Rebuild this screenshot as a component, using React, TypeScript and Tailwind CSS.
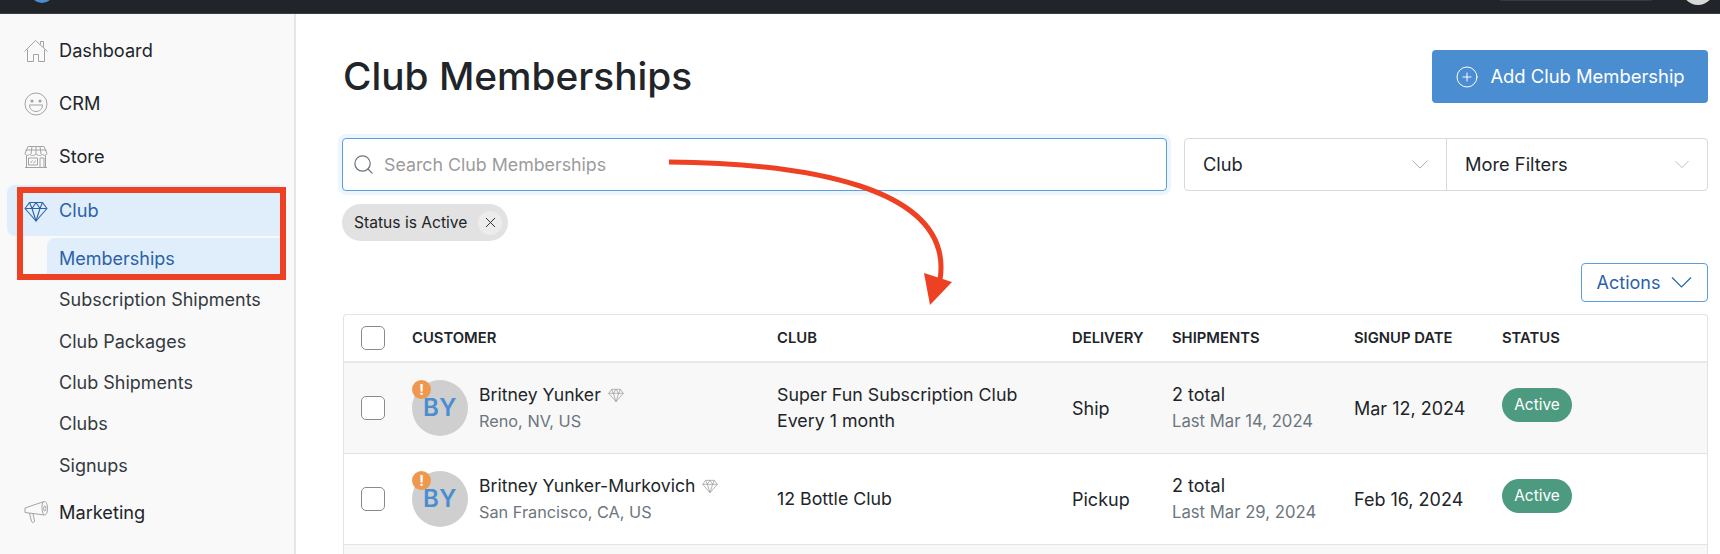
import { CirclePlus, Search, X } from 'lucide-react'

const FONT = { fontFamily: 'Inter, "Noto Sans", sans-serif' }

function HouseIcon() {
  return (
    <svg viewBox="0 0 24 24" className="h-[24px] w-[24px] text-[#a3a3a3]" fill="none" stroke="currentColor" strokeWidth="1" strokeLinejoin="round">
      <path d="M0.5 12.5 11.5 1.5 23.5 12.5" />
      <path d="M16.5 5.5V2.5H19.5V8.5" />
      <path d="M3.5 10.5V22.5H9.5V15.5H14.5V22.5H20.5V10.5" />
    </svg>
  )
}

function LaughIcon() {
  return (
    <svg viewBox="0 0 24 24" className="h-[24px] w-[24px] text-[#a3a3a3]" fill="none" stroke="currentColor" strokeWidth="1">
      <circle cx="12" cy="12" r="11" />
      <circle cx="8" cy="9" r="1.6" fill="currentColor" stroke="none" />
      <circle cx="16" cy="9" r="1.6" fill="currentColor" stroke="none" />
      <path d="M5.5 13H18.5C18.5 17 15.5 19.5 12 19.5S5.5 17 5.5 13Z" />
    </svg>
  )
}

function StoreIcon() {
  return (
    <svg viewBox="0 0 24 24" className="h-[24px] w-[24px] text-[#a3a3a3]" fill="none" stroke="currentColor" strokeWidth="1" strokeLinejoin="round">
      <path d="M4 1.5H20L23 8.5C23 10.5 19.5 11 18.5 9C17.5 11 14 11 12 9C10 11 6.5 11 5.5 9C4.5 11 1 10.5 1 8.5Z" />
      <path d="M8 1.5 7 9M12 1.5V9M16 1.5 17 9M1.5 5H22.5" />
      <path d="M2.5 10.5V22.5H21.5V10.5M1 22.5H23" />
      <path d="M4.5 13H13.5V20H4.5ZM16 13H20V22.5H16Z" />
      <path d="M6.5 18 8.5 15.5M9.5 18.5 11.5 15.5" />
    </svg>
  )
}

function MegaphoneIcon() {
  return (
    <svg viewBox="0 0 24 24" className="h-[24px] w-[24px] text-[#a3a3a3]" fill="none" stroke="currentColor" strokeWidth="1" strokeLinejoin="round">
      <path d="M1 8 20 1.5C22.5 1.5 23.5 5 23.5 8.5S22.5 15 20.5 15L1 12.5Z" />
      <path d="M19 2C17.5 4 17.5 12.5 20 15" />
      <ellipse cx="20.8" cy="8.5" rx="1.2" ry="2.5" />
      <path d="M5.5 13 7.5 21.5C8 23 10.5 22.5 10.5 21L9 13.5" />
    </svg>
  )
}

function GemIcon({ className }: { className: string }) {
  return (
    <svg viewBox="0 0 24 24" className={className} fill="none" stroke="currentColor" strokeWidth="1.1" strokeLinejoin="round">
      <path d="M5.5 3.5H18.5L23 9.5 12 22 1 9.5Z" />
      <path d="M1 9.5H23M5.5 3.5 8 9.5 12 3.5 16 9.5 18.5 3.5M8 9.5 12 22 16 9.5" />
    </svg>
  )
}

// wide flat chevron, lucide's is too narrow for these selects
function Chevron({ className }: { className: string }) {
  return (
    <svg viewBox="0 0 20 11" className={className} fill="none" stroke="currentColor" strokeWidth="1.2">
      <path d="M0.5 0.5 10 10 19.5 0.5" />
    </svg>
  )
}

function NavItem({ icon, label }: { icon: React.ReactNode; label: string }) {
  return (
    <div className="flex h-[53px] items-center gap-[11px] pl-[24px] text-[18.2px] text-[#212529]">
      {icon}
      <span>{label}</span>
    </div>
  )
}

const SUB_ITEMS = ['Subscription Shipments', 'Club Packages', 'Club Shipments', 'Clubs', 'Signups']

function Sidebar() {
  return (
    <aside className="relative h-full w-[296px] shrink-0 border-r-2 border-[#e6e6e6] bg-[#f9f9f9] pt-[10px]">
      <NavItem icon={<HouseIcon />} label="Dashboard" />
      <NavItem icon={<LaughIcon />} label="CRM" />
      <NavItem icon={<StoreIcon />} label="Store" />

      <div className="mt-[2px] ml-[7px] mr-[14px] flex h-[51px] items-center gap-[11px] rounded-l-lg bg-[#e0eefb] pl-[17px] text-[18.2px] text-[#2b62a8]">
        <GemIcon className="h-[24px] w-[24px]" />
        <span>Club</span>
      </div>
      <div className="mt-[2px] ml-[47px] mr-[14px] flex h-[41px] items-center rounded-tl-lg bg-[#e0eefb] pl-[12px] text-[18px] text-[#2b62a8]">
        Memberships
      </div>

      {SUB_ITEMS.map((item) => (
        <div key={item} className="flex h-[41.4px] items-center pl-[59px] text-[18px] text-[#343a40]">
          {item}
        </div>
      ))}

      <NavItem icon={<MegaphoneIcon />} label="Marketing" />

      <div className="absolute top-[173px] left-[17px] h-[93px] w-[269px] border-[6px] border-[#ee4023]" />
    </aside>
  )
}

function Toolbar() {
  return (
    <>
      <div className="mt-[36px] flex h-[53px] items-center justify-between">
        <h1 className="pl-[1px] text-[38.8px] font-medium text-[#212529]">Club Memberships</h1>
        <button className="flex h-[53px] w-[276px] items-center justify-center gap-[11px] rounded bg-[#4a8dd1] text-[18.4px] text-white">
          <CirclePlus size={24} strokeWidth={1} />
          Add Club Membership
        </button>
      </div>

      <div className="mt-[35px] flex h-[53px] gap-[17px]">
        <div className="flex h-[53px] w-[825px] items-center gap-[9px] rounded border border-[#5a9ee0] bg-white pl-[9px] ring-4 ring-[#eef6fd]">
          <Search size={23} strokeWidth={1.3} className="text-[#6c757d]" />
          <span className="pt-[1px] text-[17.8px] text-[#9b9b9b]">Search Club Memberships</span>
        </div>
        <div className="flex h-[53px] flex-1 rounded border border-[#d9d9d9] text-[18.3px] text-[#212529]">
          <div className="flex w-[262px] items-center justify-between border-r border-[#d9d9d9] pr-[18px] pl-[18px]">
            Club
            <Chevron className="h-[9px] w-[16px] text-[#a8a8a8]" />
          </div>
          <div className="flex flex-1 items-center justify-between pr-[18px] pl-[18px]">
            More Filters
            <Chevron className="h-[9px] w-[14px] text-[#b5b5b5]" />
          </div>
        </div>
      </div>

      <div className="mt-[13px] flex h-[37px]">
        <div className="flex h-[37px] w-[166px] items-center justify-between rounded-full bg-[#e2e2e2] pr-[6px] pl-[12px] text-[15.6px] text-[#212529]">
          Status is Active
          <span className="flex h-[24px] w-[24px] items-center justify-center rounded-full bg-[#ececec]">
            <X size={17} strokeWidth={1.3} />
          </span>
        </div>
      </div>

      <div className="mt-[22px] flex justify-end">
        <button className="flex h-[39px] w-[127px] items-center justify-center gap-[11px] rounded border border-[#5a9ee0] text-[18px] text-[#2b62a8]">
          Actions
          <Chevron className="h-[11px] w-[21px]" />
        </button>
      </div>
    </>
  )
}

function Checkbox() {
  return <div className="h-[24px] w-[24px] rounded-[5px] border border-[#8a8a8a] bg-white" />
}

const ROWS = [
  {
    name: 'Britney Yunker',
    location: 'Reno, NV, US',
    club: ['Super Fun Subscription Club', 'Every 1 month'],
    delivery: 'Ship',
    last: 'Last Mar 14, 2024',
    signup: 'Mar 12, 2024',
    rowClass: 'bg-[#f8f8f8]',
  },
  {
    name: 'Britney Yunker-Murkovich',
    location: 'San Francisco, CA, US',
    club: ['12 Bottle Club'],
    delivery: 'Pickup',
    last: 'Last Mar 29, 2024',
    signup: 'Feb 16, 2024',
    rowClass: 'bg-white',
  },
]

function MembershipTable() {
  return (
    <div className="mt-[12px] ml-[1px] rounded-t border border-b-0 border-[#e4e4e4]">
      <div className="grid h-[48px] grid-cols-[68px_365px_295px_100px_182px_148px_1fr] items-center border-b-2 border-[#e9e9e9] text-[14.8px] font-semibold text-[#212529]">
        <div className="pl-[17px]">
          <Checkbox />
        </div>
        <div>CUSTOMER</div>
        <div>CLUB</div>
        <div>DELIVERY</div>
        <div>SHIPMENTS</div>
        <div>SIGNUP DATE</div>
        <div>STATUS</div>
      </div>

      {ROWS.map((row) => (
        <div
          key={row.name}
          className={`grid h-[91px] grid-cols-[68px_365px_295px_100px_182px_148px_1fr] items-center border-b border-[#e4e4e4] text-[18px] text-[#212529] ${row.rowClass}`}
        >
          <div className="pl-[17px]">
            <Checkbox />
          </div>
          <div className="flex items-center gap-[11px]">
            <div className="relative flex h-[56px] w-[56px] items-center justify-center rounded-full bg-[#cfcfcf] text-[24px] font-semibold tracking-[0.5px] text-[#4a8dd1]">
              BY
              <span className="absolute top-0 left-0 flex h-[19px] w-[19px] items-center justify-center rounded-full bg-[#ee984f] text-[14px] font-bold tracking-normal text-white">
                !
              </span>
            </div>
            <div>
              <div className="flex items-center gap-[7px] text-[17.6px] leading-[26px]">
                {row.name}
                <GemIcon className="h-[16px] w-[16px] text-[#999999]" />
              </div>
              <div className="text-[16.3px] leading-[26px] text-[#6c757d]">{row.location}</div>
            </div>
          </div>
          <div className="text-[17.8px] leading-[26px]">
            {row.club.map((line) => (
              <div key={line}>{line}</div>
            ))}
          </div>
          <div>{row.delivery}</div>
          <div>
            <div className="leading-[26px]">2 total</div>
            <div className="text-[16.7px] leading-[26px] text-[#6c757d]">{row.last}</div>
          </div>
          <div>{row.signup}</div>
          <div>
            <span className="flex h-[34px] w-[70px] -translate-y-[3px] items-center justify-center rounded-full bg-[#4c9a80] text-[15.4px] text-white">
              Active
            </span>
          </div>
        </div>
      ))}

      <div className="h-[40px] bg-[#f8f8f8]" />
    </div>
  )
}

export default function App() {
  return (
    <div className="relative flex h-[554px] w-[1720px] flex-col overflow-hidden bg-white" style={FONT}>
      <header className="flex h-[14px] shrink-0 items-end justify-between overflow-hidden border-b border-[#3a3f44] bg-[#212529]">
        <div className="mb-[10px] ml-[30px] h-[24px] w-[24px] rounded-full bg-[#4a8dd1]" />
        <div className="flex items-end">
          <div className="mb-[12px] h-[2px] w-[152px] bg-[#343a40]" />
          <div className="mr-[6px] mb-[8px] ml-[30px] h-[32px] w-[32px] rounded-full bg-[#d8d8d8]" />
        </div>
      </header>

      <div className="flex min-h-0 flex-1">
        <Sidebar />
        <main className="flex-1 pr-[12px] pl-[46px]">
          <Toolbar />
          <MembershipTable />
        </main>
      </div>

      {/* annotation arrow drawn over the page */}
      <svg className="pointer-events-none absolute top-0 left-0" width="1720" height="554" fill="none">
        <path d="M669 162C800 163 955 185 940 280" stroke="#ee4023" strokeWidth="5" />
        <path d="M924 273 952 282 930 305Z" fill="#ee4023" />
      </svg>
    </div>
  )
}
